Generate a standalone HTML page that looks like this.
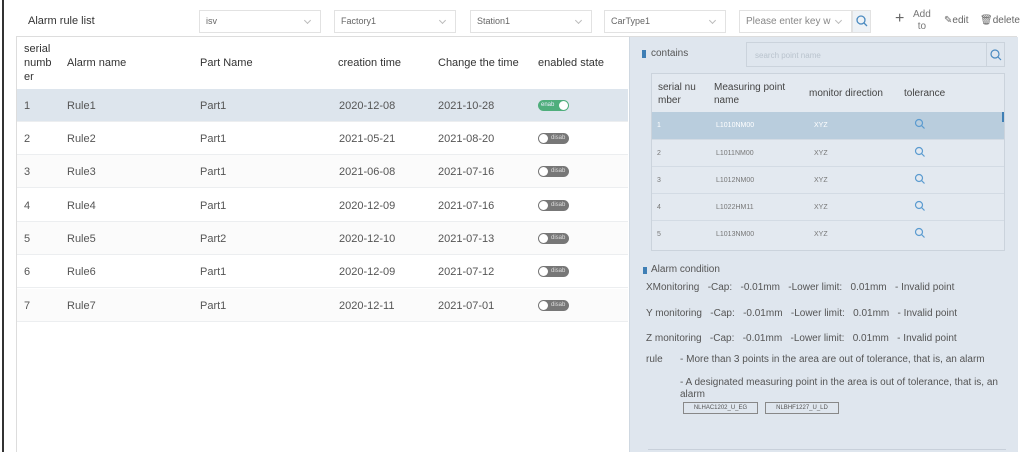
<!DOCTYPE html>
<html><head><meta charset="utf-8"><style>
*{box-sizing:border-box;margin:0;padding:0}
body{width:1024px;height:452px;overflow:hidden;background:#fff;font-family:"Liberation Sans",sans-serif;color:#333;position:relative;font-size:11px}
.a{position:absolute;white-space:nowrap}
.sel{position:absolute;top:10px;height:23px;border:1px solid #e2e2e2;background:#fff;font-size:9px;color:#666;padding:5px 6px}
.sel::after{content:"";position:absolute;right:10px;top:7px;width:4px;height:4px;border-right:1px solid #bbb;border-bottom:1px solid #bbb;transform:rotate(45deg)}
.row{position:absolute;left:17px;width:611px;height:33px;border-bottom:1px solid #eceef0;font-size:11px;color:#555}
.row span{position:absolute;top:11px}
.tg{position:absolute;left:521px;top:11px;width:31px;height:11px;border-radius:6px;background:#777;color:#ddd;font-size:6px;line-height:11px;padding-left:13px}
.tg::before{content:"";position:absolute;left:1px;top:1px;width:9px;height:9px;border-radius:50%;background:#fff}
.tg.on{background:#4fae7c;padding-left:3px;color:#eef}
.tg.on::before{left:21px}
.pr{position:absolute;left:652px;width:352px;height:27px;border-top:1px solid #d3dbe4;font-size:7px;color:#777}
.pr span{position:absolute;top:10px}
.mag{position:absolute;left:262px;top:6px}
.cond{position:absolute;left:646px;font-size:10px;color:#555;white-space:nowrap}
</style></head><body>
<div class="a" style="left:2px;top:0;width:2px;height:452px;background:#333"></div>
<div class="a" style="left:16px;top:36px;width:1px;height:416px;background:#ddd"></div>
<div class="a" style="left:17px;top:36px;width:1000px;height:1px;background:#ddd"></div>
<div class="a" style="left:28px;top:15px;font-size:11px;color:#333">Alarm rule list</div>
<div class="sel" style="left:199px;width:122px">isv</div>
<div class="sel" style="left:334px;width:122px">Factory1</div>
<div class="sel" style="left:470px;width:122px">Station1</div>
<div class="sel" style="left:604px;width:122px">CarType1</div>
<div class="sel" style="left:739px;width:113px;font-size:10px;color:#888">Please enter key w</div>
<div class="a" style="left:852px;top:10px;width:19px;height:23px;border:1px solid #e2e2e2;background:#eef2f6"><svg width="17" height="21"><circle cx="8" cy="9" r="4" fill="none" stroke="#4a8ac0" stroke-width="1.3"/><line x1="11" y1="12" x2="14" y2="15" stroke="#4a8ac0" stroke-width="1.3"/></svg></div>
<div class="a" style="left:895px;top:10px;font-size:16px;color:#666">+</div>
<div class="a" style="left:913px;top:9px;font-size:10px;color:#777;line-height:12px;text-align:center">Add<br>to</div>
<div class="a" style="left:944px;top:15px;font-size:10px;color:#666">✎edit</div>
<div class="a" style="left:980px;top:15px;font-size:10px;color:#666">🗑delete</div>

<div class="a" style="left:24px;top:42px;font-size:11px;line-height:14px">serial<br>numb<br>er</div>
<div class="a" style="left:67px;top:57px">Alarm name</div>
<div class="a" style="left:200px;top:57px">Part Name</div>
<div class="a" style="left:338px;top:57px">creation time</div>
<div class="a" style="left:438px;top:57px">Change the time</div>
<div class="a" style="left:538px;top:57px">enabled state</div>

<div class="row" style="top:89px;background:#dde5ed"><span style="left:7px">1</span><span style="left:50px">Rule1</span><span style="left:183px">Part1</span><span style="left:322px">2020-12-08</span><span style="left:421px">2021-10-28</span><div class="tg on">enab</div></div>
<div class="row" style="top:122px"><span style="left:7px">2</span><span style="left:50px">Rule2</span><span style="left:183px">Part1</span><span style="left:322px">2021-05-21</span><span style="left:421px">2021-08-20</span><div class="tg">disab</div></div>
<div class="row" style="top:155px;background:#fbfbfb"><span style="left:7px">3</span><span style="left:50px">Rule3</span><span style="left:183px">Part1</span><span style="left:322px">2021-06-08</span><span style="left:421px">2021-07-16</span><div class="tg">disab</div></div>
<div class="row" style="top:189px"><span style="left:7px">4</span><span style="left:50px">Rule4</span><span style="left:183px">Part1</span><span style="left:322px">2020-12-09</span><span style="left:421px">2021-07-16</span><div class="tg">disab</div></div>
<div class="row" style="top:222px;background:#fbfbfb"><span style="left:7px">5</span><span style="left:50px">Rule5</span><span style="left:183px">Part2</span><span style="left:322px">2020-12-10</span><span style="left:421px">2021-07-13</span><div class="tg">disab</div></div>
<div class="row" style="top:255px"><span style="left:7px">6</span><span style="left:50px">Rule6</span><span style="left:183px">Part1</span><span style="left:322px">2020-12-09</span><span style="left:421px">2021-07-12</span><div class="tg">disab</div></div>
<div class="row" style="top:289px;background:#fbfbfb"><span style="left:7px">7</span><span style="left:50px">Rule7</span><span style="left:183px">Part1</span><span style="left:322px">2020-12-11</span><span style="left:421px">2021-07-01</span><div class="tg">disab</div></div>

<div class="a" style="left:629px;top:37px;width:389px;height:415px;background:#dfe6ee;border-left:1px solid #cfd8e1"></div>
<div class="a" style="left:642px;top:50px;width:4px;height:8px;background:#3f7fb5"></div>
<div class="a" style="left:651px;top:48px;font-size:10px;color:#555">contains</div>
<div class="a" style="left:746px;top:42px;width:241px;height:25px;border:1px solid #cbd3dc;background:#dfe6ee;font-size:8px;color:#b9c3cd;padding:8px 8px">search point name</div>
<div class="a" style="left:987px;top:42px;width:18px;height:25px;border:1px solid #cbd3dc;border-left:none"><svg width="17" height="23"><circle cx="8" cy="11" r="4" fill="none" stroke="#4a8ac0" stroke-width="1.2"/><line x1="11" y1="14" x2="14" y2="17" stroke="#4a8ac0" stroke-width="1.2"/></svg></div>
<div class="a" style="left:651px;top:73px;width:354px;height:178px;background:#e3e9f0;border:1px solid #cbd3dc"></div>
<div class="a" style="left:658px;top:81px;font-size:10px;color:#444;line-height:13px">serial nu<br>mber</div>
<div class="a" style="left:714px;top:81px;font-size:10px;color:#444;line-height:13px">Measuring point<br>name</div>
<div class="a" style="left:809px;top:88px;font-size:10px;color:#444">monitor direction</div>
<div class="a" style="left:904px;top:88px;font-size:10px;color:#444">tolerance</div>
<div class="pr" style="top:112px;background:#b9cddd;color:#fff;border:none"><span style="left:5px">1</span><span style="left:64px">L1010NM00</span><span style="left:162px">XYZ</span><svg class="mag" width="12" height="12"><circle cx="5" cy="5" r="3.5" fill="none" stroke="#5b9bd0" stroke-width="1.2"/><line x1="7.5" y1="7.5" x2="10.5" y2="10.5" stroke="#5b9bd0" stroke-width="1.2"/></svg></div>
<div class="a" style="left:1002px;top:112px;width:2px;height:10px;background:#3f7fb5"></div>
<div class="pr" style="top:139px"><span style="left:5px">2</span><span style="left:64px">L1011NM00</span><span style="left:162px">XYZ</span><svg class="mag" width="12" height="12"><circle cx="5" cy="5" r="3.5" fill="none" stroke="#5b9bd0" stroke-width="1.2"/><line x1="7.5" y1="7.5" x2="10.5" y2="10.5" stroke="#5b9bd0" stroke-width="1.2"/></svg></div>
<div class="pr" style="top:166px"><span style="left:5px">3</span><span style="left:64px">L1012NM00</span><span style="left:162px">XYZ</span><svg class="mag" width="12" height="12"><circle cx="5" cy="5" r="3.5" fill="none" stroke="#5b9bd0" stroke-width="1.2"/><line x1="7.5" y1="7.5" x2="10.5" y2="10.5" stroke="#5b9bd0" stroke-width="1.2"/></svg></div>
<div class="pr" style="top:193px"><span style="left:5px">4</span><span style="left:64px">L1022HM11</span><span style="left:162px">XYZ</span><svg class="mag" width="12" height="12"><circle cx="5" cy="5" r="3.5" fill="none" stroke="#5b9bd0" stroke-width="1.2"/><line x1="7.5" y1="7.5" x2="10.5" y2="10.5" stroke="#5b9bd0" stroke-width="1.2"/></svg></div>
<div class="pr" style="top:220px"><span style="left:5px">5</span><span style="left:64px">L1013NM00</span><span style="left:162px">XYZ</span><svg class="mag" width="12" height="12"><circle cx="5" cy="5" r="3.5" fill="none" stroke="#5b9bd0" stroke-width="1.2"/><line x1="7.5" y1="7.5" x2="10.5" y2="10.5" stroke="#5b9bd0" stroke-width="1.2"/></svg></div>

<div class="a" style="left:643px;top:267px;width:4px;height:7px;background:#3f7fb5"></div>
<div class="cond" style="left:651px;top:264px">Alarm condition</div>
<div class="cond" style="top:282px">XMonitoring &nbsp; -Cap: &nbsp; -0.01mm &nbsp; -Lower limit: &nbsp; 0.01mm &nbsp; - Invalid point</div>
<div class="cond" style="top:308px">Y monitoring &nbsp; -Cap: &nbsp; -0.01mm &nbsp; -Lower limit: &nbsp; 0.01mm &nbsp; - Invalid point</div>
<div class="cond" style="top:333px">Z monitoring &nbsp; -Cap: &nbsp; -0.01mm &nbsp; -Lower limit: &nbsp; 0.01mm &nbsp; - Invalid point</div>
<div class="cond" style="top:354px">rule</div>
<div class="cond" style="left:680px;top:354px">- More than 3 points in the area are out of tolerance, that is, an alarm</div>
<div class="cond" style="left:680px;top:377px;line-height:12px">- A designated measuring point in the area is out of tolerance, that is, an<br>alarm</div>
<div class="a" style="left:683px;top:402px;width:75px;height:12px;border:1px solid #888;font-size:6px;color:#555;text-align:center;line-height:10px">NLHAC1202_U_EG</div>
<div class="a" style="left:765px;top:402px;width:74px;height:12px;border:1px solid #888;font-size:6px;color:#555;text-align:center;line-height:10px">NLBHF1227_U_LD</div>
<div class="a" style="left:648px;top:449px;width:358px;height:1px;background:#c8d0da"></div>
</body></html>
